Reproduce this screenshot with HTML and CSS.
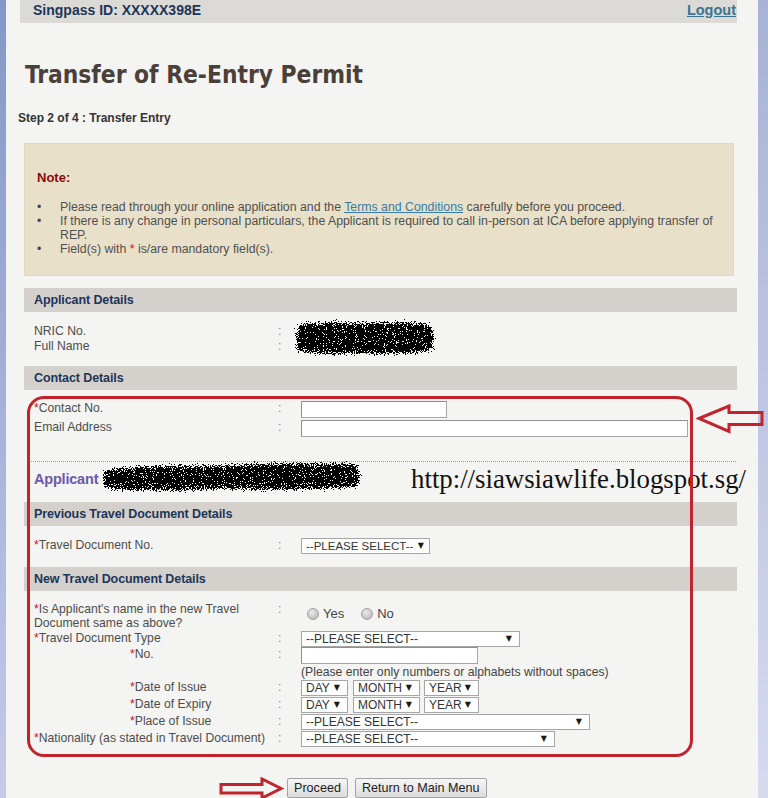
FILE: index.html
```html
<!DOCTYPE html>
<html>
<head>
<meta charset="utf-8">
<title>Transfer of Re-Entry Permit</title>
<link rel="stylesheet" href="styles.css">
</head>
<body>
<div class="page">
  <div class="edge edge-l"></div>
  <div class="main">
    <div class="topbar">
      <span class="sp-id">Singpass ID: XXXXX398E</span>
      <span class="logout">Logout</span>
    </div>
    <h1 class="title">Transfer of Re-Entry Permit</h1>
    <div class="step">Step 2 of 4 : Transfer Entry</div>

    <div class="note">
      <div class="note-title">Note:</div>
      <ul class="note-list">
        <li><span class="b">&bull;</span><span>Please read through your online application and the <a class="lnk">Terms and Conditions</a> carefully before you proceed.</span></li>
        <li><span class="b">&bull;</span><span>If there is any change in personal particulars, the Applicant is required to call in-person at ICA before applying transfer of REP.</span></li>
        <li><span class="b">&bull;</span><span>Field(s) with <span class="req">*</span> is/are mandatory field(s).</span></li>
      </ul>
    </div>

    <div class="sec-h sec-first">Applicant Details</div>
    <div class="info">
      <div class="irow"><span>NRIC No.</span><span class="colon">:</span><span></span></div>
      <div class="irow"><span>Full Name</span><span class="colon">:</span><span></span></div>
      <svg class="redact redact-1" width="148" height="42" viewBox="0 0 148 42">
        <defs>
          <filter id="speck1" x="-5%" y="-10%" width="110%" height="120%" color-interpolation-filters="sRGB">
            <feGaussianBlur in="SourceGraphic" stdDeviation="3" result="b"/>
            <feTurbulence type="fractalNoise" baseFrequency="0.9" numOctaves="2" seed="4" result="t"/>
            <feColorMatrix in="t" type="matrix" values="0 0 0 0 0  0 0 0 0 0  0 0 0 0 0  1.4 0 0 0 -0.2" result="n"/>
            <feComposite in="b" in2="n" operator="arithmetic" k1="0" k2="1.6" k3="1.6" k4="-1.55" result="c"/>
            <feComponentTransfer in="c"><feFuncA type="discrete" tableValues="0 1"/></feComponentTransfer>
          </filter>
        </defs>
        <path d="M6 6 Q40 1 80 4 Q120 1 143 7 Q147 21 142 36 Q100 41 70 38 Q30 41 5 36 Q1 21 6 6 Z" fill="#000" filter="url(#speck1)"/>
      </svg>
    </div>

    <div class="sec-h">Contact Details</div>
    <div class="form">
      <div class="frow r-contact1">
        <span><span class="req">*</span>Contact No.</span><span class="colon">:</span>
        <span class="inp w-contact"></span>
      </div>
      <div class="frow r-contact2">
        <span>Email Address</span><span class="colon">:</span>
        <span class="inp w-email"></span>
      </div>
      <div class="dotted"></div>
      <div class="appl-row">
        <span class="appl">Applicant</span>
        <span class="url">http://siawsiawlife.blogspot.sg/</span>
      </div>
      <svg class="redact redact-2" width="266" height="34" viewBox="0 0 266 34">
        <defs>
          <filter id="speck2" x="-5%" y="-10%" width="110%" height="120%" color-interpolation-filters="sRGB">
            <feGaussianBlur in="SourceGraphic" stdDeviation="3" result="b"/>
            <feTurbulence type="fractalNoise" baseFrequency="0.9" numOctaves="2" seed="9" result="t"/>
            <feColorMatrix in="t" type="matrix" values="0 0 0 0 0  0 0 0 0 0  0 0 0 0 0  1.4 0 0 0 -0.2" result="n"/>
            <feComposite in="b" in2="n" operator="arithmetic" k1="0" k2="1.6" k3="1.6" k4="-1.55" result="c"/>
            <feComponentTransfer in="c"><feFuncA type="discrete" tableValues="0 1"/></feComponentTransfer>
          </filter>
        </defs>
        <path d="M3 9 Q40 3 110 4 Q190 0 260 2 Q265 14 260 29 Q190 33 130 31 Q60 34 5 31 Q0 20 3 9 Z" fill="#000" filter="url(#speck2)"/>
      </svg>

      <div class="sec-h">Previous Travel Document Details</div>
      <div class="frow r-prev">
        <span><span class="req">*</span>Travel Document No.</span><span class="colon">:</span>
        <span class="sel w-prev">--PLEASE SELECT--</span>
      </div>

      <div class="sec-h sec-new">New Travel Document Details</div>
      <div class="frow r-q">
        <span><span class="req">*</span>Is Applicant's name in the new Travel<br>Document same as above?</span><span class="colon">:</span>
        <span class="radios">
          <span class="radio"></span><span class="rlabel">Yes</span>
          <span class="radio r-no"></span><span class="rlabel">No</span>
        </span>
      </div>
      <div class="frow r-type">
        <span><span class="req">*</span>Travel Document Type</span><span class="colon">:</span>
        <span class="sel w-type">--PLEASE SELECT--</span>
      </div>
      <div class="frow r-no-row">
        <span class="ind"><span class="req">*</span>No.</span><span class="colon">:</span>
        <span class="no-val">
          <span class="inp w-no"></span>
          <span class="hint">(Please enter only numbers or alphabets without spaces)</span>
        </span>
      </div>
      <div class="frow r-d">
        <span class="ind"><span class="req">*</span>Date of Issue</span><span class="colon">:</span>
        <span class="dates">
          <span class="sel w-day">DAY</span><span class="sel w-month">MONTH</span><span class="sel w-year">YEAR</span>
        </span>
      </div>
      <div class="frow r-d">
        <span class="ind"><span class="req">*</span>Date of Expiry</span><span class="colon">:</span>
        <span class="dates">
          <span class="sel w-day">DAY</span><span class="sel w-month">MONTH</span><span class="sel w-year">YEAR</span>
        </span>
      </div>
      <div class="frow r-d">
        <span class="ind"><span class="req">*</span>Place of Issue</span><span class="colon">:</span>
        <span class="sel w-place">--PLEASE SELECT--</span>
      </div>
      <div class="frow r-d">
        <span><span class="req">*</span>Nationality (as stated in Travel Document)</span><span class="colon">:</span>
        <span class="sel w-nat">--PLEASE SELECT--</span>
      </div>

      <div class="redbox"></div>
      <svg class="arrow arrow-left" width="70" height="30" viewBox="0 0 70 30">
        <polygon points="3,14.5 33,2 33,8.5 66,8.5 66,20.5 33,20.5 33,27.5" fill="none" stroke="#c1242c" stroke-width="3" stroke-linejoin="miter"/>
      </svg>
    </div>

    <div class="buttons">
      <svg class="arrow arrow-right" width="66" height="23" viewBox="0 0 66 23">
        <polygon points="2,7.5 43,7.5 43,2 62,11.5 43,21 43,16 2,16" fill="none" stroke="#c1242c" stroke-width="3" stroke-linejoin="miter"/>
      </svg>
      <span class="btn">Proceed</span>
      <span class="btn">Return to Main Menu</span>
    </div>
  </div>
  <div class="edge edge-r"></div>
</div>
</body>
</html>
```

FILE: styles.css
```css
* { box-sizing: border-box; }

body {
  margin: 0;
  background: #f4f4f2;
  font-family: "Liberation Sans", Arial, sans-serif;
  overflow: hidden;
}

.page {
  display: flex;
  height: 798px;
}

.edge { flex: none; }
.edge-l {
  width: 6px;
  background: linear-gradient(#8597c8, #c4cbea);
}
.edge-r {
  width: 10px;
  background: linear-gradient(#a8b2d4, #d5daef);
}

.main {
  width: 752px;
  flex: none;
}

/* top bar */
.topbar {
  margin-left: 14px;
  width: 717px;
  height: 23px;
  background: #dcdad6;
  display: flex;
  justify-content: space-between;
  align-items: flex-start;
  padding: 2px 1px 0 13px;
}
.sp-id {
  font-weight: bold;
  font-size: 14px;
  line-height: 16px;
  color: #1c3559;
}
.logout {
  font-weight: bold;
  font-size: 14.5px;
  line-height: 16px;
  color: #3b7491;
  text-decoration: underline;
}

.title {
  margin: 38px 0 0 19px;
  font-family: "DejaVu Sans Condensed", "DejaVu Sans", sans-serif;
  font-stretch: condensed;
  font-weight: bold;
  font-size: 24.3px;
  line-height: 28px;
  color: #4a4039;
}

.step {
  margin: 22px 0 0 12px;
  font-weight: bold;
  font-size: 12px;
  line-height: 14px;
  color: #333;
}

/* note */
.note {
  margin: 18px 0 0 18px;
  width: 710px;
  height: 133px;
  background: #e8e0c9;
  border: 1px solid #e0d7bd;
  padding: 27px 14px 0 12px;
}
.note-title {
  color: #8b0b0b;
  font-weight: bold;
  font-size: 13px;
  line-height: 14px;
}
.note-list {
  margin: 15px 0 0;
  padding: 0;
  list-style: none;
}
.note-list li {
  display: flex;
  font-size: 12.3px;
  line-height: 14px;
  color: #505050;
}
.note-list .b {
  width: 23px;
  flex: none;
  color: #444;
}
.lnk {
  color: #3a7ca6;
  text-decoration: underline;
}
.req { color: #d01414; }

/* section headers */
.sec-h {
  margin-left: 18px;
  width: 713px;
  height: 24px;
  background: #d4d1cd;
  padding-left: 10px;
  font-weight: bold;
  font-size: 12.5px;
  letter-spacing: -0.1px;
  line-height: 24px;
  color: #1c3559;
}
.sec-first { margin-top: 12px; }

/* applicant info */
.info {
  position: relative;
  padding: 12px 0 12px 28px;
}
.irow {
  display: grid;
  grid-template-columns: 244px 23px 1fr;
  font-size: 12.2px;
  line-height: 15px;
  color: #4d4d4d;
}
.colon { color: #888; }

.redact { position: absolute; }
.redact-1 { left: 285px; top: 5px; }
.redact-2 { left: 93px; top: 70px; }

/* form */
.form {
  position: relative;
  padding-bottom: 10px;
}
.frow {
  display: grid;
  grid-template-columns: 244px 23px 1fr;
  align-items: start;
  margin-left: 28px;
  font-size: 12.2px;
  line-height: 14px;
  color: #4d4d4d;
}
.r-contact1 { padding-top: 11px; }
.r-contact2 { margin-top: 2px; }
.r-prev { margin-top: 12px; margin-bottom: 13px; }
.r-q { margin-top: 11px; }
.r-type { margin-top: 1px; }
.r-d { margin-top: 1px; }
.r-no-row { margin-top: 0; }

.ind { padding-left: 96px; }

.inp {
  display: block;
  height: 17px;
  background: #fff;
  border: 1px solid #a6a6a6;
  border-top-color: #8f8f8f;
  border-left-color: #8f8f8f;
}
.w-contact { width: 146px; }
.w-email { width: 387px; }
.w-no { width: 177px; }

.no-val { display: flex; flex-direction: column; align-items: flex-start; }
.hint { margin-top: 1px; color: #444; white-space: nowrap; }

.sel {
  display: flex;
  align-items: center;
  justify-content: space-between;
  height: 16px;
  background: #fff;
  border: 1px solid #a6a6a6;
  padding: 0 7px 0 4px;
  font-size: 12px;
  line-height: 14px;
  color: #333;
  white-space: nowrap;
}
.sel::after {
  content: "\25BC";
  font-family: "DejaVu Sans", sans-serif;
  font-size: 8px;
  color: #1a1a1a;
}
.w-prev { width: 129px; padding-right: 5px; font-size: 11.5px; }
.w-type { width: 219px; }
.w-day { width: 47px; }
.w-month { width: 67px; }
.w-year { width: 55px; }
.w-place { width: 289px; }
.w-nat { width: 254px; }

.dates { display: flex; }
.dates .w-month { margin-left: 5px; }
.dates .w-year { margin-left: 4px; }

.radios {
  display: flex;
  align-items: center;
  padding: 5px 0 0 6px;
  height: 19px;
}
.radio {
  width: 12px;
  height: 12px;
  border-radius: 50%;
  border: 1px solid #a3a3a3;
  background: radial-gradient(circle at 40% 35%, #ececec 0, #c9c9c9 55%, #b3b3b3 100%);
}
.rlabel {
  margin-left: 4px;
  font-size: 13px;
  color: #444;
}
.r-no { margin-left: 17px; }

.sec-new { margin-top: 0; }

.dotted {
  margin: 24px 0 0 21px;
  width: 709px;
  border-top: 1px dotted #9a9a9a;
}
.appl-row {
  display: flex;
  align-items: center;
  height: 34px;
  margin-bottom: 6px;
  padding-left: 28px;
  padding-right: 12px;
}
.appl {
  font-weight: bold;
  font-size: 14.5px;
  color: #6e58a9;
  letter-spacing: -0.2px;
}
.url {
  margin-left: auto;
  font-family: "Liberation Serif", "Times New Roman", serif;
  font-size: 26.8px;
  color: #111;
}

.redbox {
  position: absolute;
  left: 21px;
  top: 6px;
  width: 666px;
  height: 361px;
  border: 3px solid #c1242c;
  border-radius: 17px;
}
.arrow { position: absolute; }
.arrow-left { left: 690px; top: 14px; }

/* buttons */
.buttons {
  position: relative;
  margin-top: 21px;
  padding-left: 281px;
  display: flex;
  gap: 7px;
}
.arrow-right { left: 213px; top: -1px; }
.btn {
  display: inline-flex;
  align-items: center;
  height: 20px;
  padding: 0 6px;
  border: 1px solid #a3a3a3;
  border-radius: 2px;
  background: linear-gradient(#f7f7f7, #dcdcdc);
  font-size: 12.6px;
  color: #222;
}
```
